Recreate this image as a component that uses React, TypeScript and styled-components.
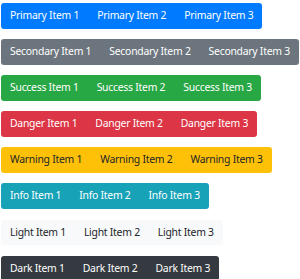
import React from 'react';
import styled, { createGlobalStyle } from 'styled-components';

type Variant = 'primary' | 'secondary' | 'success' | 'danger' | 'warning' | 'info' | 'light' | 'dark';

const PALETTE: Record<Variant, { bg: string; fg: string }> = {
  primary: { bg: '#007bff', fg: '#ffffff' },
  secondary: { bg: '#6c757d', fg: '#ffffff' },
  success: { bg: '#28a745', fg: '#ffffff' },
  danger: { bg: '#dc3545', fg: '#ffffff' },
  warning: { bg: '#ffc107', fg: '#212529' },
  info: { bg: '#17a2b8', fg: '#ffffff' },
  light: { bg: '#f8f9fa', fg: '#212529' },
  dark: { bg: '#343a40', fg: '#ffffff' },
};

const GlobalStyle = createGlobalStyle`
  body {
    margin: 0;
    background: #ffffff;
    font-family: "Noto Sans", "Open Sans", sans-serif;
  }
`;

const Page = styled.div`
  display: flex;
  flex-direction: column;
  align-items: flex-start;
  gap: 10.6px;
  padding: 3px 0 0 1px;
`;

const ListGroup = styled.ul<{ $variant: Variant }>`
  display: flex;
  margin: 0;
  padding: 0;
  list-style: none;
  border-radius: 3px;
  background: ${(p) => PALETTE[p.$variant].bg};
  color: ${(p) => PALETTE[p.$variant].fg};
`;

const Item = styled.li`
  padding: 4px 9px;
  font-size: 10.4px;
  letter-spacing: -0.25px;
  line-height: 17.5px;
  white-space: nowrap;
`;

const GROUPS: { variant: Variant; label: string }[] = [
  { variant: 'primary', label: 'Primary' },
  { variant: 'secondary', label: 'Secondary' },
  { variant: 'success', label: 'Success' },
  { variant: 'danger', label: 'Danger' },
  { variant: 'warning', label: 'Warning' },
  { variant: 'info', label: 'Info' },
  { variant: 'light', label: 'Light' },
  { variant: 'dark', label: 'Dark' },
];

export default function App() {
  return (
    <>
      <GlobalStyle />
      <Page>
        {GROUPS.map((g) => (
          <ListGroup key={g.variant} $variant={g.variant}>
            {[1, 2, 3].map((n) => (
              <Item key={n}>
                {g.label} Item {n}
              </Item>
            ))}
          </ListGroup>
        ))}
      </Page>
    </>
  );
}
